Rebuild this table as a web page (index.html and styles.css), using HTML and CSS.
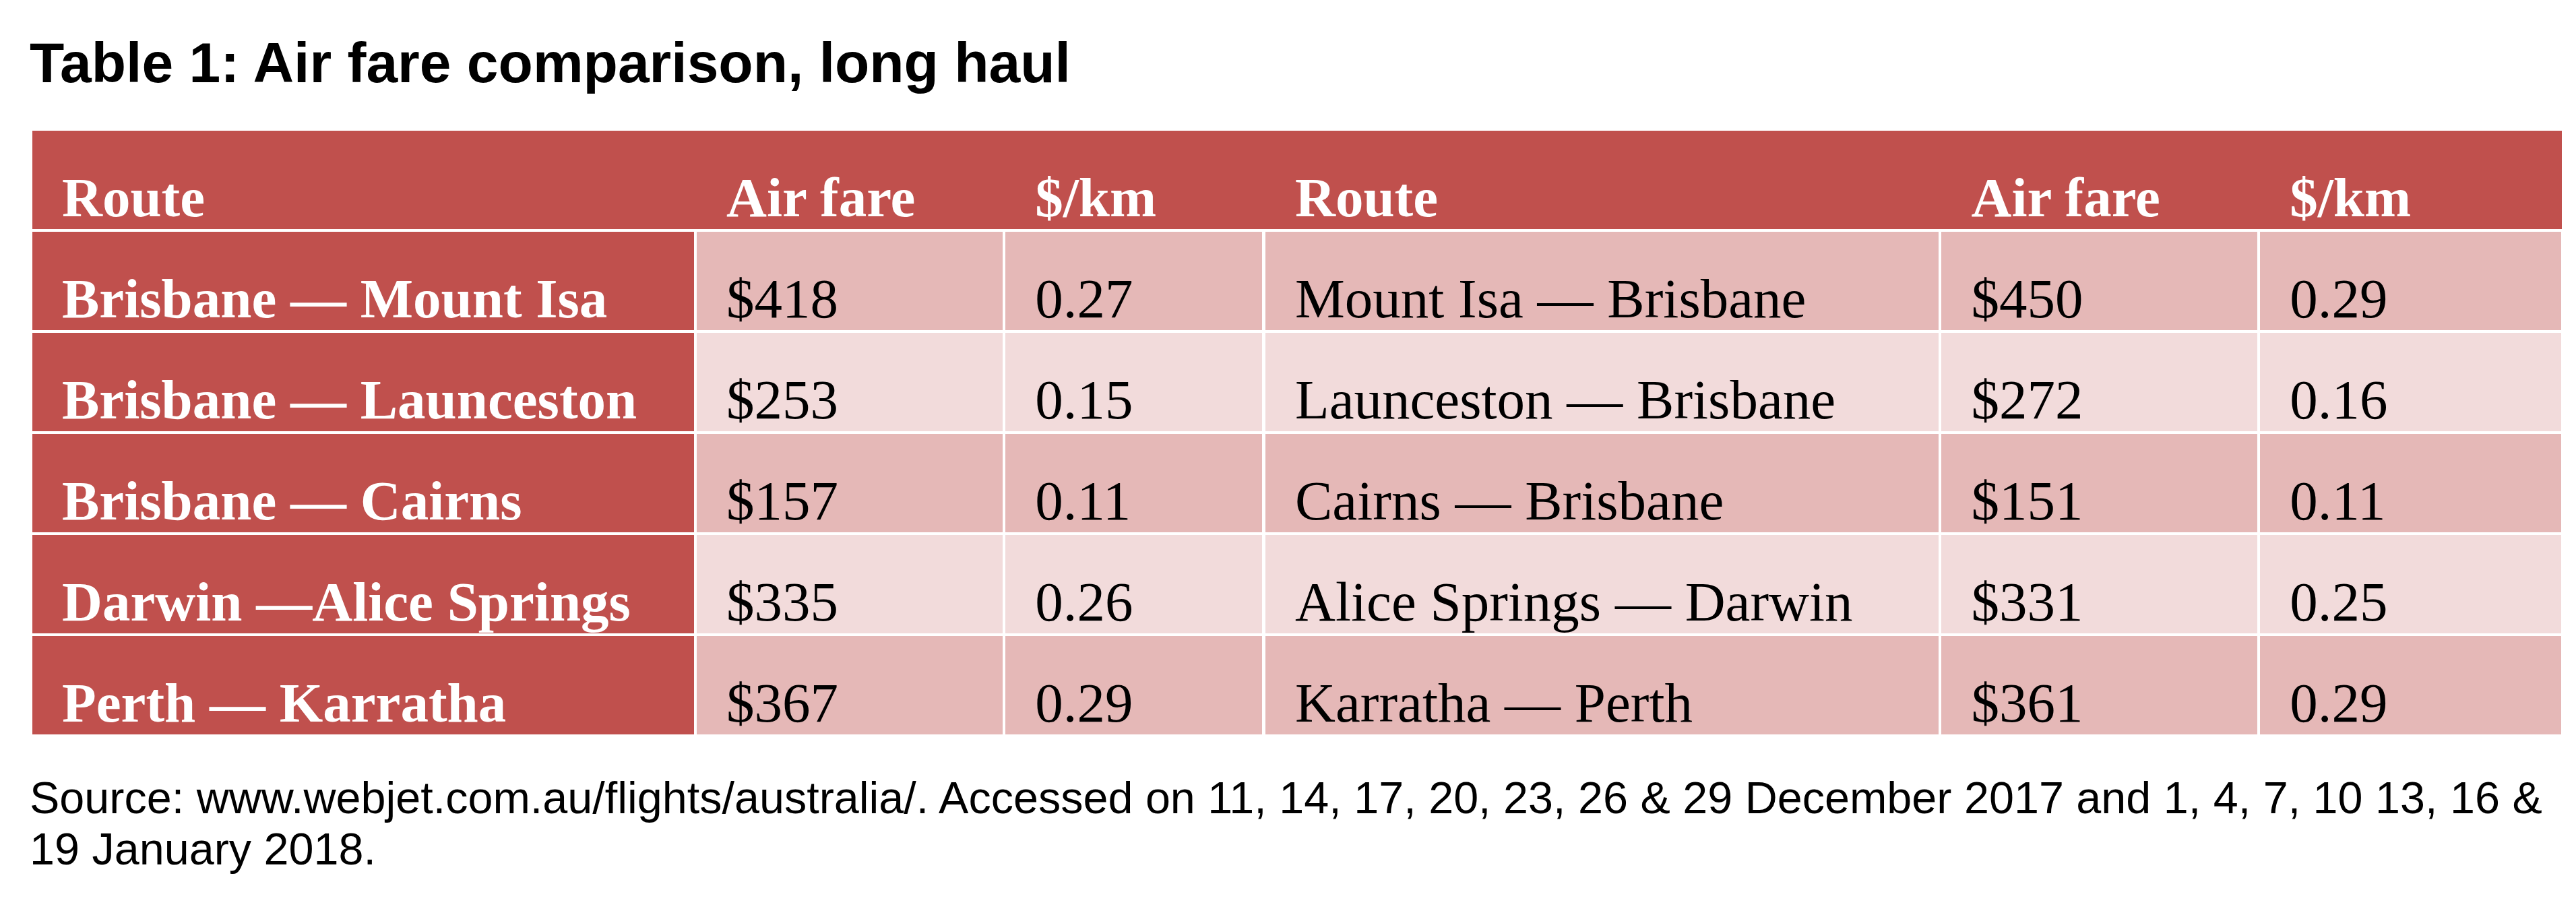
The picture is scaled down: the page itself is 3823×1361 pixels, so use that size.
FILE: index.html
```html
<!DOCTYPE html>
<html lang="en">
<head>
<meta charset="utf-8">
<title>Table 1: Air fare comparison, long haul</title>
<link rel="stylesheet" href="styles.css">
</head>
<body>
<div class="page">
  <h1 class="title">Table 1: Air fare comparison, long haul</h1>
  <div class="fare-table">
    <div class="row head">
      <div class="cell">Route</div>
      <div class="cell">Air fare</div>
      <div class="cell">$/km</div>
      <div class="cell">Route</div>
      <div class="cell">Air fare</div>
      <div class="cell">$/km</div>
    </div>
    <div class="row dark">
      <div class="cell key">Brisbane — Mount Isa</div>
      <div class="cell">$418</div>
      <div class="cell">0.27</div>
      <div class="cell">Mount Isa — Brisbane</div>
      <div class="cell">$450</div>
      <div class="cell">0.29</div>
    </div>
    <div class="row light">
      <div class="cell key">Brisbane — Launceston</div>
      <div class="cell">$253</div>
      <div class="cell">0.15</div>
      <div class="cell">Launceston — Brisbane</div>
      <div class="cell">$272</div>
      <div class="cell">0.16</div>
    </div>
    <div class="row dark">
      <div class="cell key">Brisbane — Cairns</div>
      <div class="cell">$157</div>
      <div class="cell">0.11</div>
      <div class="cell">Cairns — Brisbane</div>
      <div class="cell">$151</div>
      <div class="cell">0.11</div>
    </div>
    <div class="row light">
      <div class="cell key">Darwin —Alice Springs</div>
      <div class="cell">$335</div>
      <div class="cell">0.26</div>
      <div class="cell">Alice Springs — Darwin</div>
      <div class="cell">$331</div>
      <div class="cell">0.25</div>
    </div>
    <div class="row dark">
      <div class="cell key">Perth — Karratha</div>
      <div class="cell">$367</div>
      <div class="cell">0.29</div>
      <div class="cell">Karratha — Perth</div>
      <div class="cell">$361</div>
      <div class="cell">0.29</div>
    </div>
  </div>
  <p class="source">Source: www.webjet.com.au/flights/australia/. Accessed on 11, 14, 17, 20, 23, 26 &amp; 29 December 2017 and 1, 4, 7, 10 13, 16 &amp;<br>19 January 2018.</p>
</div>
</body>
</html>
```

FILE: styles.css
```css
html, body {
  margin: 0;
  padding: 0;
  background: #ffffff;
}

.page {
  padding: 47px 0 0 44px;
}

.title {
  margin: 0;
  font-family: "Liberation Sans", Arial, sans-serif;
  font-weight: bold;
  font-size: 84px;
  line-height: 1.117;
  color: #000000;
  white-space: nowrap;
}

.fare-table {
  display: flex;
  flex-direction: column;
  gap: 4.5px;
  margin: 53.5px 0 0 4px;
  width: 3753.5px;
}

.row {
  display: grid;
  grid-template-columns: 981.5px 453.7px 381.3px 999px 468.3px 447.2px;
  column-gap: 4.5px;
  height: 145.5px;
}

.cell {
  display: flex;
  align-items: flex-end;
  padding-left: 44px;
  font-family: "Liberation Serif", "Times New Roman", serif;
  font-size: 83px;
  line-height: 1.107;
  color: #000000;
  white-space: nowrap;
  overflow: hidden;
}

.head {
  background: #c0504d;
}

.head .cell {
  color: #ffffff;
  font-weight: bold;
}

.cell.key {
  background: #c0504d;
  color: #ffffff;
  font-weight: bold;
}

.dark .cell {
  background: #e5b8b7;
}

.light .cell {
  background: #f2dbdb;
}

.dark .cell.key,
.light .cell.key {
  background: #c0504d;
}

.source {
  margin: 56px 0 0 0;
  font-family: "Liberation Sans", Arial, sans-serif;
  font-size: 66.5px;
  line-height: 76px;
  color: #000000;
  white-space: nowrap;
}
```
